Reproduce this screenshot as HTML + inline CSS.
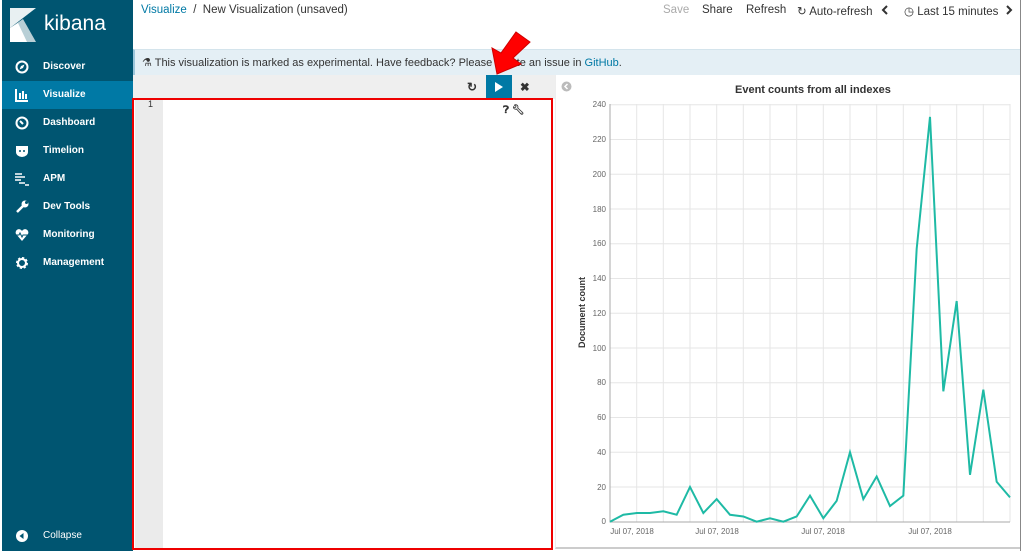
<!DOCTYPE html>
<html><head><style>
*{margin:0;padding:0;box-sizing:border-box}
body{width:1024px;height:551px;overflow:hidden;background:#fff;font-family:"Liberation Sans",sans-serif;position:relative}
.sb{position:absolute;left:2px;top:0;width:131px;height:551px;background:#005571;color:#fff}
.logo{position:absolute;left:8px;top:8px}
.logo span{position:absolute;left:34px;top:4px;font-size:21px;color:#fff}
.nav{position:absolute;left:0;width:131px;height:28px;font-size:10px;font-weight:bold;line-height:28px}
.nav .t{position:absolute;left:41px}
.nav .i{position:absolute;left:13px;top:7px;width:14px;height:14px}
.act{background:#0079a5}
.a{position:absolute;font-size:11.5px;color:#333;white-space:nowrap}
</style></head><body>
<div class="sb">
 <div class="logo"><svg width="26" height="34" viewBox="0 0 26 34"><polygon points="0,0 26,0 0,20" fill="#e8f0f2"/><polygon points="0,20 13,11 26,34 0,34" fill="#b8cfd6"/><polygon points="0,20 8,15 17,34 0,34" fill="#fff"/></svg><span>kibana</span></div>
 <div class="nav" style="top:53px"><svg class="i" viewBox="0 0 14 14"><circle cx="7" cy="7" r="5.5" fill="none" stroke="#fff" stroke-width="2"/><path d="M9.5 4.5L8 8 4.5 9.5 6 6z" fill="#fff"/></svg><span class="t">Discover</span></div>
 <div class="nav act" style="top:81px"><svg class="i" viewBox="0 0 14 14"><path d="M1 1v12h12" fill="none" stroke="#fff" stroke-width="2"/><rect x="4" y="5" width="2" height="6" fill="#fff"/><rect x="7" y="3" width="2" height="8" fill="#fff"/><rect x="10" y="6" width="2" height="5" fill="#fff"/></svg><span class="t">Visualize</span></div>
 <div class="nav" style="top:109px"><svg class="i" viewBox="0 0 14 14"><circle cx="7" cy="7" r="5.5" fill="none" stroke="#fff" stroke-width="2"/><path d="M5 5l3 3" stroke="#fff" stroke-width="2"/></svg><span class="t">Dashboard</span></div>
 <div class="nav" style="top:137px"><svg class="i" viewBox="0 0 14 14"><path d="M1 2h12v6a6 5 0 0 1-12 0z" fill="#fff"/><circle cx="5" cy="7" r="1" fill="#005571"/><circle cx="9" cy="7" r="1" fill="#005571"/></svg><span class="t">Timelion</span></div>
 <div class="nav" style="top:165px"><svg class="i" viewBox="0 0 14 14"><path d="M0 2h7M0 5h10M0 8h6M4 11h6M10 13h4" stroke="#fff" stroke-width="1.6"/></svg><span class="t">APM</span></div>
 <div class="nav" style="top:193px"><svg class="i" viewBox="0 0 14 14"><path d="M2 12l6-6" stroke="#fff" stroke-width="2.5"/><circle cx="10" cy="4" r="3.5" fill="#fff"/><circle cx="11.5" cy="2.5" r="1.5" fill="#005571"/></svg><span class="t">Dev Tools</span></div>
 <div class="nav" style="top:221px"><svg class="i" viewBox="0 0 14 14"><path d="M7 13L1 6a3 3 0 0 1 6-3 3 3 0 0 1 6 3z" fill="#fff"/><path d="M1 7h3l1-2 2 4 1-2h5" fill="none" stroke="#005571" stroke-width="1"/></svg><span class="t">Monitoring</span></div>
 <div class="nav" style="top:249px"><svg class="i" viewBox="0 0 14 14"><circle cx="7" cy="7" r="4.5" fill="none" stroke="#fff" stroke-width="3" stroke-dasharray="2 1.5"/><circle cx="7" cy="7" r="4" fill="none" stroke="#fff" stroke-width="2"/></svg><span class="t">Management</span></div>
 <div class="nav" style="top:522px"><svg class="i" viewBox="0 0 14 14"><circle cx="7" cy="7" r="6" fill="#fff"/><path d="M8.5 4v6L4.5 7z" fill="#005571"/></svg><span class="t" style="font-weight:normal">Collapse</span></div>
</div>
<div class="a" style="left:141px;top:4px"><span style="color:#0079a5">Visualize</span> &nbsp;/&nbsp; New Visualization (unsaved)</div>
<div class="a" style="left:663px;top:4px;color:#aaa">Save</div>
<div class="a" style="left:702px;top:4px">Share</div>
<div class="a" style="left:746px;top:4px">Refresh</div>
<div class="a" style="left:797px;top:4px">&#x21bb; Auto-refresh</div>
<svg style="position:absolute;left:881px;top:5px" width="8" height="10"><path d="M6 1L2 5l4 4" stroke="#333" stroke-width="2" fill="none"/></svg>
<div class="a" style="left:904px;top:4px">&#x25F7; Last 15 minutes</div>
<svg style="position:absolute;left:1005px;top:5px" width="8" height="10"><path d="M2 1l4 4-4 4" stroke="#333" stroke-width="2" fill="none"/></svg>
<div style="position:absolute;left:1020px;top:0;width:1px;height:551px;background:#888"></div>
<div style="position:absolute;left:133px;top:49px;width:887px;height:26px;background:#e4eff5;border-top:1px solid #d4e4ec;border-left:2px solid #9dc6da"></div>
<div class="a" style="left:142px;top:56px;font-size:11px;color:#333">&#x2697; This visualization is marked as experimental. Have feedback? Please create an issue in <span style="color:#0079a5">GitHub</span>.</div>
<div style="position:absolute;left:133px;top:75px;width:422px;height:24px;background:#efefef"></div>
<div class="a" style="left:467px;top:80px;font-weight:bold;font-size:12px">&#x21bb;</div>
<div style="position:absolute;left:486px;top:75px;width:26px;height:24px;background:#0079a5"></div>
<svg style="position:absolute;left:494px;top:82px" width="10" height="10"><path d="M1 0v10l8-5z" fill="#fff"/></svg>
<div class="a" style="left:520px;top:80px;font-weight:bold">&#x2716;</div>
<div style="position:absolute;left:135px;top:99px;width:28px;height:450px;background:#ebebeb"></div>
<div class="a" style="left:148px;top:99px;font-size:9px">1</div>
<div class="a" style="left:503px;top:105px;font-size:10px;font-weight:bold">&#x2753;&#xFE0E; &#x1F527;&#xFE0E;</div>
<div style="position:absolute;left:132px;top:98px;width:421px;height:452px;border:2px solid #e00"></div>
<div style="position:absolute;left:555px;top:75px;width:465px;height:474px;border-bottom:2px solid #ccc;border-left:1px solid #eee"></div>
<svg style="position:absolute;left:561px;top:81px" width="11" height="11"><circle cx="5.5" cy="5.5" r="5" fill="#bbb"/><path d="M6.5 3L4 5.5 6.5 8" stroke="#fff" stroke-width="1.5" fill="none"/></svg>
<div class="a" style="left:735px;top:84px;font-size:11px;font-weight:bold;color:#333">Event counts from all indexes</div>
<div class="a" style="left:577px;top:348px;font-size:9px;font-weight:bold;transform:rotate(-90deg);transform-origin:left top">Document count</div>
<svg style="position:absolute;left:0;top:0" width="1024" height="551">
<g stroke="#e6e6e6" stroke-width="1">
<path d="M610 104.7H1010M610 139.5H1010M610 174.2H1010M610 209H1010M610 243.7H1010M610 278.5H1010M610 313.2H1010M610 348H1010M610 382.7H1010M610 417.5H1010M610 452.2H1010M610 487H1010"/>
<path d="M636.7 104V522M663.3 104V522M690 104V522M716.7 104V522M743.3 104V522M770 104V522M796.7 104V522M823.3 104V522M850 104V522M876.7 104V522M903.3 104V522M930 104V522M956.7 104V522M983.3 104V522M1010 104V522"/>
</g>
<path d="M610 104V522H1010" stroke="#aaa" fill="none"/>
<g font-family="Liberation Sans" font-size="8" fill="#666" text-anchor="end">
<text x="606" y="107">240</text><text x="606" y="142">220</text><text x="606" y="177">200</text><text x="606" y="212">180</text><text x="606" y="246">160</text><text x="606" y="281">140</text><text x="606" y="316">120</text><text x="606" y="351">100</text><text x="606" y="385">80</text><text x="606" y="420">60</text><text x="606" y="455">40</text><text x="606" y="490">20</text><text x="606" y="524">0</text>
</g>
<g font-family="Liberation Sans" font-size="8" fill="#666" text-anchor="middle">
<text x="632" y="534">Jul 07, 2018</text><text x="717" y="534">Jul 07, 2018</text><text x="823" y="534">Jul 07, 2018</text><text x="930" y="534">Jul 07, 2018</text>
</g>
<g transform="translate(610,521.7) scale(13.3333,-1.7375)">
<polyline vector-effect="non-scaling-stroke" fill="none" stroke="#1ebaa5" stroke-width="2" points="0,0 1,4 2,5 3,5 4,6 5,4 6,20 7,5 8,13 9,4 10,3 11,0 12,2 13,0 14,3 15,15 16,2 17,12 18,40 19,13 20,26 21,9 22,15 23,157 24,233 25,75 26,127 27,27 28,76 29,23 30,14"/>
</g>
<polygon points="516,32 530,42 513,58 521,64 497,74 492,48 501,53" fill="#f00" stroke="#c00" stroke-width="1"/>
</svg>
</body></html>
